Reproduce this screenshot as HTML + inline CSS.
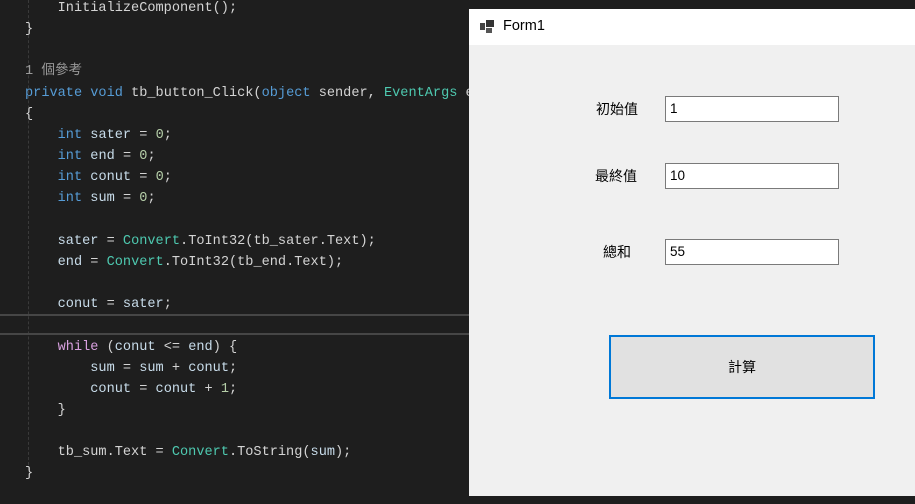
<!DOCTYPE html>
<html><head><meta charset="utf-8"><style>
body{margin:0;width:915px;height:504px;background:#1e1e1e;position:relative;overflow:hidden}
.code{position:absolute;left:25px;top:-2px;font-family:"Liberation Mono","Noto Sans CJK TC",monospace;font-size:13.6px;line-height:21.15px;color:#d4d4d4;white-space:pre}
.k{color:#569cd6}.t{color:#4ec9b0}.v{color:#c8dcea}.p{color:#d8a0df}.n{color:#b5cea8}.c{color:#999}
.cur{position:absolute;left:0;width:469px;top:314px;height:17px;border-top:2px solid #464646;border-bottom:2px solid #464646}
.guide{position:absolute;left:28px;top:0;height:470px;border-left:1px dashed #3a3a3a}
.form{position:absolute;left:469px;top:9px;width:446px;height:487px;background:#f0f0f0;font-family:"Liberation Sans","Noto Sans CJK TC",sans-serif}
.title{height:36px;background:#fff;position:relative}
.title span{position:absolute;left:34px;top:9px;font-size:14.5px;color:#000}
.lbl{position:absolute;font-size:14px;color:#000}
.tb{position:absolute;left:196px;width:174px;height:26px;background:#fff;border:1px solid #7a7a7a;box-sizing:border-box;font-size:13.5px;padding:4px 4px;line-height:16px}
.btn{position:absolute;left:140px;top:326px;width:266px;height:64px;box-sizing:border-box;border:2px solid #0078d7;background:#e1e1e1;text-align:center;line-height:60px;font-size:14px}
</style></head><body>
<div class="guide"></div>
<div class="cur"></div>
<div class="code">    InitializeComponent();
}

<span class="c">1 個參考</span>
<span class="k">private void</span> tb_button_Click(<span class="k">object</span> sender, <span class="t">EventArgs</span> e
{
    <span class="k">int</span> <span class="v">sater</span> = <span class="n">0</span>;
    <span class="k">int</span> <span class="v">end</span> = <span class="n">0</span>;
    <span class="k">int</span> <span class="v">conut</span> = <span class="n">0</span>;
    <span class="k">int</span> <span class="v">sum</span> = <span class="n">0</span>;

    <span class="v">sater</span> = <span class="t">Convert</span>.ToInt32(tb_sater.Text);
    <span class="v">end</span> = <span class="t">Convert</span>.ToInt32(tb_end.Text);

    <span class="v">conut</span> = <span class="v">sater</span>;

    <span class="p">while</span> (<span class="v">conut</span> &lt;= <span class="v">end</span>) {
        <span class="v">sum</span> = <span class="v">sum</span> + <span class="v">conut</span>;
        <span class="v">conut</span> = <span class="v">conut</span> + <span class="n">1</span>;
    }

    tb_sum.Text = <span class="t">Convert</span>.ToString(<span class="v">sum</span>);
}</div>
<div class="form">
  <div class="title">
    <svg style="position:absolute;left:11px;top:10px" width="16" height="16"><rect x="0" y="4" width="5" height="7" fill="#444"/><rect x="6" y="1" width="8" height="7" fill="#333"/><rect x="6" y="9" width="6" height="5" fill="#555"/></svg>
    <span>Form1</span>
  </div>
  <div class="lbl" style="left:127px;top:90px">初始值</div>
  <div class="tb" style="top:87px">1</div>
  <div class="lbl" style="left:126px;top:157px">最終值</div>
  <div class="tb" style="top:154px">10</div>
  <div class="lbl" style="left:134px;top:233px">總和</div>
  <div class="tb" style="top:230px">55</div>
  <div class="btn">計算</div>
</div>
</body></html>
